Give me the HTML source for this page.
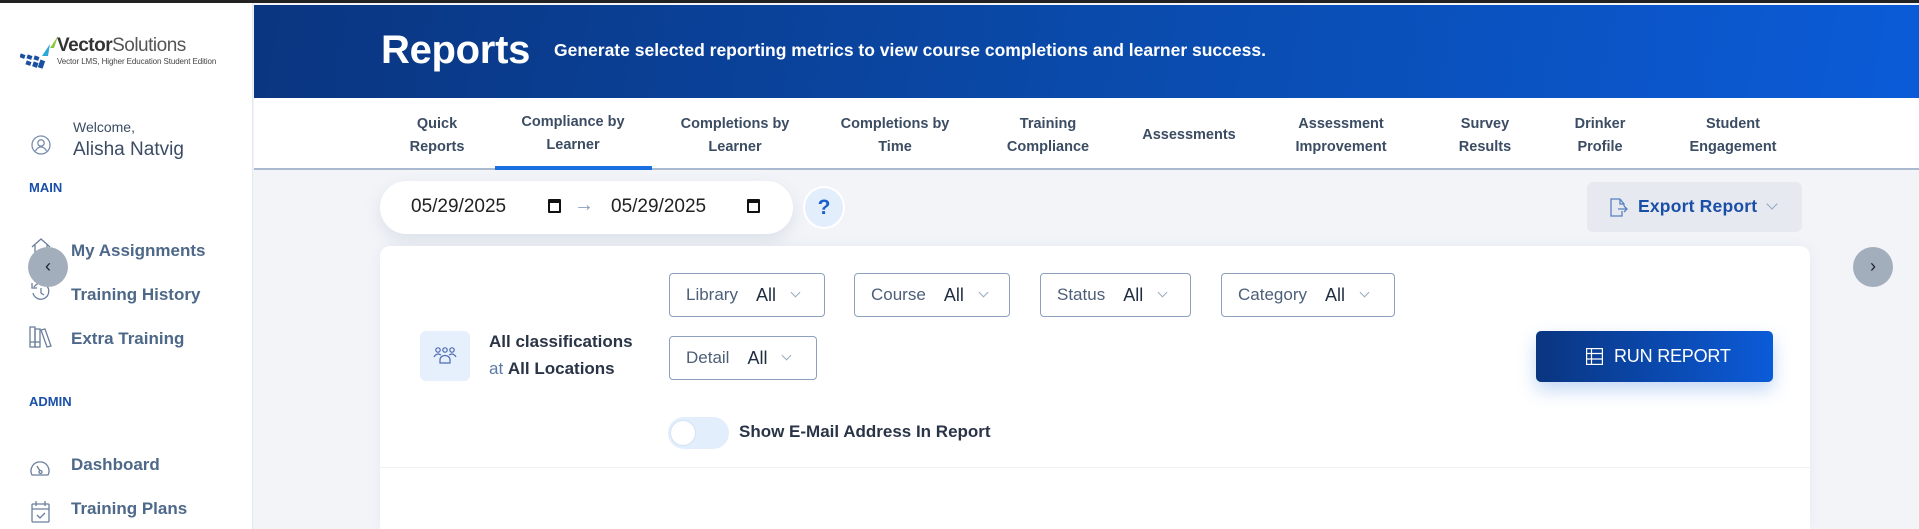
<!DOCTYPE html>
<html style="width:1919px;height:529px;overflow:hidden"><head><meta charset="utf-8"><style>
*{box-sizing:border-box;margin:0;padding:0}
body{width:1919px;height:529px;overflow:hidden;background:#f2f4f8;font-family:"Liberation Sans",sans-serif;position:relative}
.abs{position:absolute}
.topline{left:0;top:0;width:1919px;height:3px;background:#222;z-index:5}
.side{left:0;top:3px;width:253px;height:526px;background:#fff;border-right:1px solid #e3e7ee}
.nav{position:absolute;left:71px;font-size:17px;font-weight:bold;color:#4d6888}
.sec{position:absolute;left:29px;font-size:13px;font-weight:bold;color:#1a4fa8}
.hdr{left:254px;top:5px;width:1665px;height:93px;background:linear-gradient(100deg,#0a3580 0%,#0a4aaa 50%,#0b5bd8 100%)}
.tabs{left:254px;top:98px;width:1665px;height:72px;background:#fff;border-bottom:2px solid #a9b9cf}
.tab{position:absolute;top:113px;transform:translateX(-50%);text-align:center;font-size:14.5px;font-weight:bold;color:#3b4c63;line-height:23px;white-space:nowrap}
.sel{position:absolute;height:44px;top:273px;border:1.5px solid #8da0bd;border-radius:4px;background:#fff;font-size:17px;color:#4d5f78;display:flex;align-items:center;padding-left:16px}
.sel b{color:#1f2d42;margin-left:18px;font-weight:normal;font-size:18px}
.sel i{display:inline-block;width:7px;height:7px;border-right:1.3px solid #9aaac0;border-bottom:1.3px solid #9aaac0;transform:rotate(45deg);margin-left:16px;margin-top:-5px}
</style></head><body>
<div class="abs topline"></div>
<div class="abs side">
  <svg class="abs" style="left:20px;top:33px" width="42" height="36" viewBox="0 0 42 36">
    <path d="M38 0 L30 12 L34 12 Z" fill="#8cc63f"/>
    <path d="M30 8 L22 20 L28 20 Z" fill="#2aa8d8"/>
    <g fill="#1b4fa0"><rect x="0" y="18" width="5" height="4" transform="rotate(20 2 20)"/><rect x="7" y="19" width="5" height="4" transform="rotate(20 9 21)"/><rect x="14" y="20" width="5" height="4" transform="rotate(20 16 22)"/><rect x="6" y="25" width="5" height="4" transform="rotate(20 8 27)"/><rect x="13" y="26" width="5" height="5" transform="rotate(20 15 28)"/><rect x="19" y="24" width="5" height="8" transform="rotate(20 21 28)"/></g>
  </svg>
  <div class="abs" style="left:57px;top:32px;font-size:19px;color:#333;letter-spacing:-0.5px"><b>Vector</b><span style="color:#555">Solutions</span></div>
  <div class="abs" style="left:57px;top:54px;font-size:8px;color:#444;letter-spacing:-0.1px">Vector LMS, Higher Education Student Edition</div>
  <svg class="abs" style="left:31px;top:132px" width="20" height="20" viewBox="0 0 20 20" fill="none" stroke="#7a8fb0" stroke-width="1.3"><circle cx="10" cy="10" r="9"/><circle cx="10" cy="8" r="3.2"/><path d="M4.5 16c1.5-3 3.3-4 5.5-4s4 1 5.5 4"/></svg>
  <div class="abs" style="left:73px;top:116px;font-size:14px;color:#3b4c63">Welcome,</div>
  <div class="abs" style="left:73px;top:136px;font-size:19px;color:#3b4c63">Alisha Natvig</div>
  <div class="sec" style="top:177px">MAIN</div>
  <div class="nav" style="top:238px">My Assignments</div>
  <div class="nav" style="top:282px">Training History</div>
  <div class="nav" style="top:326px">Extra Training</div>
  <div class="sec" style="top:391px">ADMIN</div>
  <div class="nav" style="top:452px">Dashboard</div>
  <div class="nav" style="top:496px">Training Plans</div>
  <svg class="abs" style="left:30px;top:235px" width="22" height="16" viewBox="0 0 22 16" fill="none" stroke="#6b7f9c" stroke-width="1.3"><path d="M2 9 L11 1 L20 9 M5 7v8h12V7"/></svg>
  <svg class="abs" style="left:30px;top:278px" width="22" height="22" viewBox="0 0 22 22" fill="none" stroke="#6b7f9c" stroke-width="1.3"><path d="M4 6a8 8 0 1 1-1 6"/><path d="M2 2v5h5"/><path d="M11 7v5l3 2"/></svg>
  <svg class="abs" style="left:29px;top:323px" width="24" height="22" viewBox="0 0 24 22" fill="none" stroke="#6b7f9c" stroke-width="1.3"><rect x="1" y="1" width="5" height="20"/><rect x="6" y="3" width="5" height="18"/><path d="M12 4l4-1 6 17-4 1z"/><path d="M1 16h10"/></svg>
  <svg class="abs" style="left:29px;top:454px" width="22" height="22" viewBox="0 0 22 22" fill="none" stroke="#6b7f9c" stroke-width="1.3"><path d="M3 18a9 9 0 1 1 16 0z"/><path d="M8 9l3 5"/><circle cx="11.5" cy="15" r="1.5"/></svg>
  <svg class="abs" style="left:31px;top:497px" width="20" height="24" viewBox="0 0 20 24" fill="none" stroke="#6b7f9c" stroke-width="1.3"><rect x="1" y="4" width="17" height="18" rx="1"/><path d="M5 1v5M14 1v5M1 9h17M6 15l3 3 5-5"/></svg>
</div>
<div class="abs" style="left:28px;top:247px;width:40px;height:40px;border-radius:50%;background:#a3aebd;color:#223;font-size:18px;text-align:center;line-height:38px">‹</div>

<div class="abs hdr"></div>
<div class="abs" style="left:381px;top:28px;font-size:40px;color:#fff;font-weight:bold;letter-spacing:-0.3px">Reports</div>
<div class="abs" style="left:554px;top:40px;font-size:17.5px;color:#fff;font-weight:bold">Generate selected reporting metrics to view course completions and learner success.</div>

<div class="abs tabs"></div>
<div class="abs" style="left:495px;top:166px;width:157px;height:4px;background:#1a6fe0"></div>
<div class="tab" style="left:437px">Quick<br>Reports</div>
<div class="tab" style="left:573px;top:111px">Compliance by<br>Learner</div>
<div class="tab" style="left:735px">Completions by<br>Learner</div>
<div class="tab" style="left:895px">Completions by<br>Time</div>
<div class="tab" style="left:1048px">Training<br>Compliance</div>
<div class="tab" style="left:1189px;top:124px">Assessments</div>
<div class="tab" style="left:1341px">Assessment<br>Improvement</div>
<div class="tab" style="left:1485px">Survey<br>Results</div>
<div class="tab" style="left:1600px">Drinker<br>Profile</div>
<div class="tab" style="left:1733px">Student<br>Engagement</div>

<div class="abs" style="left:380px;top:181px;width:413px;height:53px;background:#fff;border-radius:27px;box-shadow:0 6px 16px rgba(120,140,170,.18)"></div>
<div class="abs" style="left:411px;top:196px;font-size:19px;color:#222">05/29/2025</div>
<div class="abs" style="left:548px;top:199px;width:13px;height:14px;border:2px solid #111;border-top-width:4px;border-radius:1px"></div>
<div class="abs" style="left:574px;top:194px;font-size:20px;color:#8aa0c0">→</div>
<div class="abs" style="left:611px;top:196px;font-size:19px;color:#222">05/29/2025</div>
<div class="abs" style="left:747px;top:199px;width:13px;height:14px;border:2px solid #111;border-top-width:4px;border-radius:1px"></div>
<div class="abs" style="left:803px;top:186px;width:42px;height:43px;border-radius:50%;background:#e3eefc;border:2px solid #fff;color:#1a5fcf;font-weight:bold;font-size:21px;text-align:center;line-height:39px">?</div>

<div class="abs" style="left:1587px;top:182px;width:215px;height:50px;background:#e6eaf0;border-radius:6px"></div>
<svg class="abs" style="left:1608px;top:197px" width="20" height="21" viewBox="0 0 20 21" fill="none" stroke="#5a7fbf" stroke-width="1.3"><path d="M12 2H3v17h11v-5M12 2v5h4v2M12 2l4 5M10 12h9M16 9l3 3-3 3"/></svg>
<div class="abs" style="left:1638px;top:196px;font-size:17.5px;font-weight:bold;color:#1a4fa8;letter-spacing:0.2px">Export Report</div>
<div class="abs" style="left:1768px;top:200px;width:8px;height:8px;border-right:1.3px solid #8ea4c4;border-bottom:1.3px solid #8ea4c4;transform:rotate(45deg)"></div>

<div class="abs" style="left:380px;top:246px;width:1430px;height:283px;background:#fff;border-radius:10px 10px 0 0;box-shadow:0 0 12px rgba(150,165,190,.12)"></div>
<div class="abs" style="left:380px;top:467px;width:1430px;height:1px;background:#eef0f4"></div>

<div class="abs" style="left:420px;top:331px;width:50px;height:50px;background:#e6effc;border-radius:6px"></div>
<svg class="abs" style="left:433px;top:346px" width="24" height="19" viewBox="0 0 24 19" fill="none" stroke="#4d6ab0" stroke-width="1.2"><circle cx="5" cy="4" r="2.2"/><circle cx="12" cy="4" r="2.2"/><circle cx="19" cy="4" r="2.2"/><path d="M1 11c1-2 3-3 4-3s2 .5 3 1M23 11c-1-2-3-3-4-3s-2 .5-3 1M7 17v-3c0-3 2.5-4.5 5-4.5s5 1.5 5 4.5v3z"/></svg>
<div class="abs" style="left:489px;top:332px;font-size:17px;font-weight:bold;color:#2a3447">All classifications</div>
<div class="abs" style="left:489px;top:359px;font-size:17px;color:#5a7ba8">at <b style="color:#2a3447">All Locations</b></div>

<div class="sel" style="left:669px;width:156px">Library<b>All</b><i></i></div>
<div class="sel" style="left:854px;width:156px">Course<b>All</b><i></i></div>
<div class="sel" style="left:1040px;width:151px">Status<b>All</b><i></i></div>
<div class="sel" style="left:1221px;width:174px">Category<b>All</b><i></i></div>
<div class="sel" style="left:669px;width:148px;top:336px">Detail<b>All</b><i></i></div>

<div class="abs" style="left:668px;top:417px;width:61px;height:32px;border-radius:16px;background:#e3eefc"></div>
<div class="abs" style="left:670px;top:420px;width:26px;height:26px;border-radius:50%;background:#fff;border:1px solid #d5e2f5"></div>
<div class="abs" style="left:739px;top:422px;font-size:17px;font-weight:bold;color:#2a3447">Show E-Mail Address In Report</div>

<div class="abs" style="left:1536px;top:331px;width:237px;height:51px;border-radius:5px;background:linear-gradient(90deg,#0a3580,#0b5bd8);box-shadow:0 8px 18px rgba(40,110,220,.28)"></div>
<svg class="abs" style="left:1586px;top:348px" width="17" height="17" viewBox="0 0 17 17" fill="none" stroke="#fff" stroke-width="1.2"><rect x="0.6" y="0.6" width="15.8" height="15.8"/><path d="M0.6 5.5h15.8M0.6 11h15.8M5.5 0.6v15.8"/></svg>
<div class="abs" style="left:1614px;top:346px;font-size:18px;color:#fff;letter-spacing:-0.2px">RUN REPORT</div>

<div class="abs" style="left:1853px;top:247px;width:40px;height:40px;border-radius:50%;background:#a3aebd;color:#223;font-size:18px;text-align:center;line-height:38px">›</div>
</body></html>
